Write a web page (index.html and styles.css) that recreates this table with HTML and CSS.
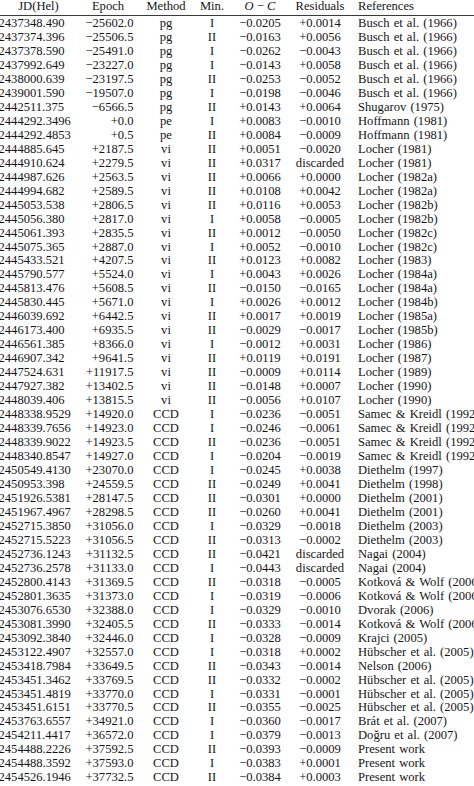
FILE: index.html
```html
<!DOCTYPE html>
<html>
<head>
<meta charset="utf-8">
<link rel="stylesheet" href="styles.css">
</head>
<body>
<table class="minima">
<colgroup>
<col class="c-jd"><col class="c-ep"><col class="c-me"><col class="c-mi"><col class="c-oc"><col class="c-re"><col class="c-rf">
</colgroup>
<thead>
<tr><th class="h-jd">JD(Hel)</th><th class="h-ep">Epoch</th><th>Method</th><th>Min.</th><th><i>O</i> − <i>C</i></th><th>Residuals</th><th class="h-rf">References</th></tr>
</thead>
<tbody>
<tr><td>2437348.490</td><td>−25602.0</td><td>pg</td><td>I</td><td>−0.0205</td><td>+0.0014</td><td>Busch et al. (1966)</td></tr>
<tr><td>2437374.396</td><td>−25506.5</td><td>pg</td><td>II</td><td>−0.0163</td><td>+0.0056</td><td>Busch et al. (1966)</td></tr>
<tr><td>2437378.590</td><td>−25491.0</td><td>pg</td><td>I</td><td>−0.0262</td><td>−0.0043</td><td>Busch et al. (1966)</td></tr>
<tr><td>2437992.649</td><td>−23227.0</td><td>pg</td><td>I</td><td>−0.0143</td><td>+0.0058</td><td>Busch et al. (1966)</td></tr>
<tr><td>2438000.639</td><td>−23197.5</td><td>pg</td><td>II</td><td>−0.0253</td><td>−0.0052</td><td>Busch et al. (1966)</td></tr>
<tr><td>2439001.590</td><td>−19507.0</td><td>pg</td><td>I</td><td>−0.0198</td><td>−0.0046</td><td>Busch et al. (1966)</td></tr>
<tr><td>2442511.375</td><td>−6566.5</td><td>pg</td><td>II</td><td>+0.0143</td><td>+0.0064</td><td>Shugarov (1975)</td></tr>
<tr><td>2444292.3496</td><td>+0.0</td><td>pe</td><td>I</td><td>+0.0083</td><td>−0.0010</td><td>Hoffmann (1981)</td></tr>
<tr><td>2444292.4853</td><td>+0.5</td><td>pe</td><td>II</td><td>+0.0084</td><td>−0.0009</td><td>Hoffmann (1981)</td></tr>
<tr><td>2444885.645</td><td>+2187.5</td><td>vi</td><td>II</td><td>+0.0051</td><td>−0.0020</td><td>Locher (1981)</td></tr>
<tr><td>2444910.624</td><td>+2279.5</td><td>vi</td><td>II</td><td>+0.0317</td><td>discarded</td><td>Locher (1981)</td></tr>
<tr><td>2444987.626</td><td>+2563.5</td><td>vi</td><td>II</td><td>+0.0066</td><td>+0.0000</td><td>Locher (1982a)</td></tr>
<tr><td>2444994.682</td><td>+2589.5</td><td>vi</td><td>II</td><td>+0.0108</td><td>+0.0042</td><td>Locher (1982a)</td></tr>
<tr><td>2445053.538</td><td>+2806.5</td><td>vi</td><td>II</td><td>+0.0116</td><td>+0.0053</td><td>Locher (1982b)</td></tr>
<tr><td>2445056.380</td><td>+2817.0</td><td>vi</td><td>I</td><td>+0.0058</td><td>−0.0005</td><td>Locher (1982b)</td></tr>
<tr><td>2445061.393</td><td>+2835.5</td><td>vi</td><td>II</td><td>+0.0012</td><td>−0.0050</td><td>Locher (1982c)</td></tr>
<tr><td>2445075.365</td><td>+2887.0</td><td>vi</td><td>I</td><td>+0.0052</td><td>−0.0010</td><td>Locher (1982c)</td></tr>
<tr><td>2445433.521</td><td>+4207.5</td><td>vi</td><td>II</td><td>+0.0123</td><td>+0.0082</td><td>Locher (1983)</td></tr>
<tr><td>2445790.577</td><td>+5524.0</td><td>vi</td><td>I</td><td>+0.0043</td><td>+0.0026</td><td>Locher (1984a)</td></tr>
<tr><td>2445813.476</td><td>+5608.5</td><td>vi</td><td>II</td><td>−0.0150</td><td>−0.0165</td><td>Locher (1984a)</td></tr>
<tr><td>2445830.445</td><td>+5671.0</td><td>vi</td><td>I</td><td>+0.0026</td><td>+0.0012</td><td>Locher (1984b)</td></tr>
<tr><td>2446039.692</td><td>+6442.5</td><td>vi</td><td>II</td><td>+0.0017</td><td>+0.0019</td><td>Locher (1985a)</td></tr>
<tr><td>2446173.400</td><td>+6935.5</td><td>vi</td><td>II</td><td>−0.0029</td><td>−0.0017</td><td>Locher (1985b)</td></tr>
<tr><td>2446561.385</td><td>+8366.0</td><td>vi</td><td>I</td><td>−0.0012</td><td>+0.0031</td><td>Locher (1986)</td></tr>
<tr><td>2446907.342</td><td>+9641.5</td><td>vi</td><td>II</td><td>+0.0119</td><td>+0.0191</td><td>Locher (1987)</td></tr>
<tr><td>2447524.631</td><td>+11917.5</td><td>vi</td><td>II</td><td>−0.0009</td><td>+0.0114</td><td>Locher (1989)</td></tr>
<tr><td>2447927.382</td><td>+13402.5</td><td>vi</td><td>II</td><td>−0.0148</td><td>+0.0007</td><td>Locher (1990)</td></tr>
<tr><td>2448039.406</td><td>+13815.5</td><td>vi</td><td>II</td><td>−0.0056</td><td>+0.0107</td><td>Locher (1990)</td></tr>
<tr><td>2448338.9529</td><td>+14920.0</td><td>CCD</td><td>I</td><td>−0.0236</td><td>−0.0051</td><td>Samec &amp; Kreidl (1992)</td></tr>
<tr><td>2448339.7656</td><td>+14923.0</td><td>CCD</td><td>I</td><td>−0.0246</td><td>−0.0061</td><td>Samec &amp; Kreidl (1992)</td></tr>
<tr><td>2448339.9022</td><td>+14923.5</td><td>CCD</td><td>II</td><td>−0.0236</td><td>−0.0051</td><td>Samec &amp; Kreidl (1992)</td></tr>
<tr><td>2448340.8547</td><td>+14927.0</td><td>CCD</td><td>I</td><td>−0.0204</td><td>−0.0019</td><td>Samec &amp; Kreidl (1992)</td></tr>
<tr><td>2450549.4130</td><td>+23070.0</td><td>CCD</td><td>I</td><td>−0.0245</td><td>+0.0038</td><td>Diethelm (1997)</td></tr>
<tr><td>2450953.398</td><td>+24559.5</td><td>CCD</td><td>II</td><td>−0.0249</td><td>+0.0041</td><td>Diethelm (1998)</td></tr>
<tr><td>2451926.5381</td><td>+28147.5</td><td>CCD</td><td>II</td><td>−0.0301</td><td>+0.0000</td><td>Diethelm (2001)</td></tr>
<tr><td>2451967.4967</td><td>+28298.5</td><td>CCD</td><td>II</td><td>−0.0260</td><td>+0.0041</td><td>Diethelm (2001)</td></tr>
<tr><td>2452715.3850</td><td>+31056.0</td><td>CCD</td><td>I</td><td>−0.0329</td><td>−0.0018</td><td>Diethelm (2003)</td></tr>
<tr><td>2452715.5223</td><td>+31056.5</td><td>CCD</td><td>II</td><td>−0.0313</td><td>−0.0002</td><td>Diethelm (2003)</td></tr>
<tr><td>2452736.1243</td><td>+31132.5</td><td>CCD</td><td>II</td><td>−0.0421</td><td>discarded</td><td>Nagai (2004)</td></tr>
<tr><td>2452736.2578</td><td>+31133.0</td><td>CCD</td><td>I</td><td>−0.0443</td><td>discarded</td><td>Nagai (2004)</td></tr>
<tr><td>2452800.4143</td><td>+31369.5</td><td>CCD</td><td>II</td><td>−0.0318</td><td>−0.0005</td><td>Kotková &amp; Wolf (2006)</td></tr>
<tr><td>2452801.3635</td><td>+31373.0</td><td>CCD</td><td>I</td><td>−0.0319</td><td>−0.0006</td><td>Kotková &amp; Wolf (2006)</td></tr>
<tr><td>2453076.6530</td><td>+32388.0</td><td>CCD</td><td>I</td><td>−0.0329</td><td>−0.0010</td><td>Dvorak (2006)</td></tr>
<tr><td>2453081.3990</td><td>+32405.5</td><td>CCD</td><td>II</td><td>−0.0333</td><td>−0.0014</td><td>Kotková &amp; Wolf (2006)</td></tr>
<tr><td>2453092.3840</td><td>+32446.0</td><td>CCD</td><td>I</td><td>−0.0328</td><td>−0.0009</td><td>Krajci (2005)</td></tr>
<tr><td>2453122.4907</td><td>+32557.0</td><td>CCD</td><td>I</td><td>−0.0318</td><td>+0.0002</td><td>Hübscher et al. (2005)</td></tr>
<tr><td>2453418.7984</td><td>+33649.5</td><td>CCD</td><td>II</td><td>−0.0343</td><td>−0.0014</td><td>Nelson (2006)</td></tr>
<tr><td>2453451.3462</td><td>+33769.5</td><td>CCD</td><td>II</td><td>−0.0332</td><td>−0.0002</td><td>Hübscher et al. (2005)</td></tr>
<tr><td>2453451.4819</td><td>+33770.0</td><td>CCD</td><td>I</td><td>−0.0331</td><td>−0.0001</td><td>Hübscher et al. (2005)</td></tr>
<tr><td>2453451.6151</td><td>+33770.5</td><td>CCD</td><td>II</td><td>−0.0355</td><td>−0.0025</td><td>Hübscher et al. (2005)</td></tr>
<tr><td>2453763.6557</td><td>+34921.0</td><td>CCD</td><td>I</td><td>−0.0360</td><td>−0.0017</td><td>Brát et al. (2007)</td></tr>
<tr><td>2454211.4417</td><td>+36572.0</td><td>CCD</td><td>I</td><td>−0.0379</td><td>−0.0013</td><td>Doğru et al. (2007)</td></tr>
<tr><td>2454488.2226</td><td>+37592.5</td><td>CCD</td><td>II</td><td>−0.0393</td><td>−0.0009</td><td>Present work</td></tr>
<tr><td>2454488.3592</td><td>+37593.0</td><td>CCD</td><td>I</td><td>−0.0383</td><td>+0.0001</td><td>Present work</td></tr>
<tr><td>2454526.1946</td><td>+37732.5</td><td>CCD</td><td>II</td><td>−0.0384</td><td>+0.0003</td><td>Present work</td></tr>
</tbody>
</table>
</body>
</html>
```
FILE: styles.css
```css
html, body {
  margin: 0;
  padding: 0;
  background: #ffffff;
  overflow: hidden;
}
body {
  width: 474px;
  height: 786px;
  font-family: "Liberation Serif", "Times New Roman", serif;
  font-size: 12.6px;
  color: #151515;
}
.minima {
  border-collapse: collapse;
  table-layout: fixed;
  width: 490px;
  margin: 0 0 0 -1.5px;
}
.c-jd { width: 84px; }
.c-ep { width: 51px; }
.c-me { width: 65px; }
.c-mi { width: 27px; }
.c-oc { width: 69px; }
.c-re { width: 51px; }
.c-rf { width: 143px; }

.minima th {
  font-weight: normal;
  line-height: 12px;
  padding: 0 0 3px 0;
  text-align: center;
  white-space: nowrap;
  border-bottom: 1px solid #3a3a3a;
}
.minima th.h-jd { padding-right: 4px; }
.minima th.h-rf { text-align: left; padding-left: 12.5px; }

.minima td {
  padding: 0;
  line-height: 13.97px;
  white-space: nowrap;
  text-align: center;
  vertical-align: top;
}
.minima tbody tr:first-child td { padding-top: 1px; }
.minima td:nth-child(1) { text-align: left; }
.minima td:nth-child(2) { text-align: right; }
.minima td:nth-child(7) {
  text-align: left;
  padding-left: 12.5px;
  word-spacing: 1px;
}
```
